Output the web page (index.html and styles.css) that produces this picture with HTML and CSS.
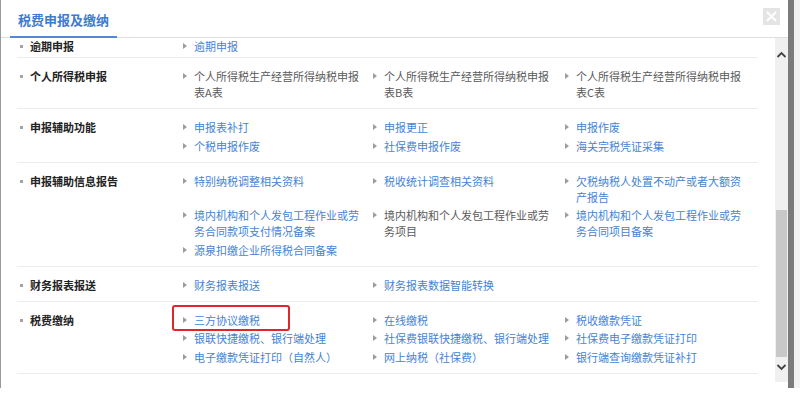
FILE: index.html
```html
<!DOCTYPE html>
<html>
<head lang="zh-CN">
    <meta charset="UTF-8">
    <title>税费申报及缴纳</title>
    <link rel="stylesheet" href="styles.css">
</head>
<body>
<div class="dialog">
    <div class="dialog-head">
        <div class="tab">税费申报及缴纳</div>
        <span class="close">
            <svg width="17" height="17" viewBox="0 0 17 17"><path d="M4 4L13 13M13 4L4 13" stroke="#fff" stroke-width="2"/></svg>
        </span>
    </div>
    <div class="dialog-body">
        <div class="list">
            <div class="row first">
                <div class="label">逾期申报</div>
                <div class="items">
                    <a class="item">逾期申报</a>
                </div>
            </div>
            <div class="row">
                <div class="label">个人所得税申报</div>
                <div class="items">
                    <span class="item off">个人所得税生产经营所得纳税申报表A表</span>
                    <span class="item off">个人所得税生产经营所得纳税申报表B表</span>
                    <span class="item off">个人所得税生产经营所得纳税申报表C表</span>
                </div>
            </div>
            <div class="row">
                <div class="label">申报辅助功能</div>
                <div class="items">
                    <a class="item">申报表补打</a>
                    <a class="item">申报更正</a>
                    <a class="item">申报作废</a>
                    <a class="item">个税申报作废</a>
                    <a class="item">社保费申报作废</a>
                    <a class="item">海关完税凭证采集</a>
                </div>
            </div>
            <div class="row">
                <div class="label">申报辅助信息报告</div>
                <div class="items">
                    <a class="item">特别纳税调整相关资料</a>
                    <a class="item">税收统计调查相关资料</a>
                    <a class="item">欠税纳税人处置不动产或者大额资产报告</a>
                    <a class="item">境内机构和个人发包工程作业或劳务合同款项支付情况备案</a>
                    <span class="item off">境内机构和个人发包工程作业或劳务项目</span>
                    <a class="item">境内机构和个人发包工程作业或劳务合同项目备案</a>
                    <a class="item">源泉扣缴企业所得税合同备案</a>
                </div>
            </div>
            <div class="row">
                <div class="label">财务报表报送</div>
                <div class="items">
                    <a class="item">财务报表报送</a>
                    <a class="item">财务报表数据智能转换</a>
                </div>
            </div>
            <div class="row">
                <div class="label">税费缴纳</div>
                <div class="items">
                    <a class="item marked">三方协议缴税<span class="mark"></span></a>
                    <a class="item">在线缴税</a>
                    <a class="item">税收缴款凭证</a>
                    <a class="item">银联快捷缴税、银行端处理</a>
                    <a class="item">社保费银联快捷缴税、银行端处理</a>
                    <a class="item">社保费电子缴款凭证打印</a>
                    <a class="item">电子缴款凭证打印（自然人）</a>
                    <a class="item">网上纳税（社保费）</a>
                    <a class="item">银行端查询缴款凭证补打</a>
                </div>
            </div>
        </div>
        <div class="scrollbar">
            <div class="arrow up">
                <svg width="11" height="8" viewBox="0 0 11 8"><path d="M1.5 6L5.5 2L9.5 6" fill="none" stroke="#444" stroke-width="1.8"/></svg>
            </div>
            <div class="thumb"></div>
            <div class="arrow down">
                <svg width="11" height="8" viewBox="0 0 11 8"><path d="M1.5 2L5.5 6L9.5 2" fill="none" stroke="#444" stroke-width="1.8"/></svg>
            </div>
        </div>
    </div>
</div>
<div class="side-dark"></div>
<div class="side-page"></div>
</body>
</html>
```

FILE: styles.css
```css
* {
    margin: 0;
    padding: 0;
    box-sizing: border-box;
}

body {
    display: flex;
    height: 393px;
    overflow: hidden;
    background-color: #fff;
    font-family: "Noto Sans CJK SC", "Microsoft YaHei", sans-serif;
    font-size: 11px;
    line-height: 16px;
}

.dialog {
    width: 788px;
    height: 388px;
    display: flex;
    flex-direction: column;
    border-left: 1px solid #9a9a9a;
    background-color: #fff;
}

.dialog-head {
    height: 38px;
    display: flex;
    padding-left: 9px;
    border-bottom: 1px solid #dedede;
}

.tab {
    height: 38px;
    padding: 12px 8px 0 8px;
    margin-bottom: -1px;
    border-bottom: 2px solid #5189d6;
    color: #3d7bd0;
    font-size: 13px;
    font-weight: bold;
}

.close {
    width: 17px;
    height: 17px;
    margin: 8px 8px 0 auto;
    background-color: #e4e4e4;
}

.close svg {
    display: block;
}

.dialog-body {
    flex: 1;
    display: flex;
    overflow: hidden;
}

.list {
    flex: 1;
    padding: 0 17px 0 16px;
}

.row {
    display: flex;
    padding: 10px 0 8px;
    border-bottom: 1px solid #ececec;
}

/* 列表已经向下滚动了一点，第一行只露出下半部分 */
.row.first {
    padding: 0 0 3px;
}

.label {
    width: 166px;
    flex: none;
    display: flex;
    color: #222;
    font-weight: bold;
}

.label::before {
    content: "";
    flex: none;
    width: 3px;
    height: 3px;
    margin: 7px 7px 0 3px;
    background-color: #a3a3a3;
}

.items {
    flex: 1;
    display: grid;
    grid-template-columns: 190px 192px 1fr;
    row-gap: 2.5px;
}

.item {
    display: flex;
    padding-right: 12px;
    color: #4583d4;
    text-decoration: none;
}

.item::before {
    content: "";
    flex: none;
    width: 0;
    height: 0;
    margin: 5px 7px 0 0;
    border-left: 4px solid #9c9c9c;
    border-top: 3px solid transparent;
    border-bottom: 3px solid transparent;
}

.item.off {
    color: #5a5a5a;
}

.marked {
    position: relative;
}

.mark {
    position: absolute;
    left: -11px;
    top: -7px;
    width: 118px;
    height: 26px;
    border: 2px solid #e0262a;
    border-radius: 3px;
}

.scrollbar {
    width: 13px;
    height: 344px;
    flex: none;
    display: flex;
    flex-direction: column;
    align-items: center;
    background-color: #f0f0f0;
}

.arrow {
    display: flex;
    justify-content: center;
}

.arrow.up {
    height: 30px;
    padding-top: 13px;
}

.arrow.down {
    padding-top: 6px;
}

.thumb {
    width: 11px;
    height: 147px;
    margin-top: 142px;
    background-color: #c8c8c8;
}

.side-dark {
    width: 6px;
    height: 388px;
    background-color: #7b7b7b;
}

.side-page {
    flex: 1;
    height: 388px;
    background-color: #f2f2f2;
}
```
